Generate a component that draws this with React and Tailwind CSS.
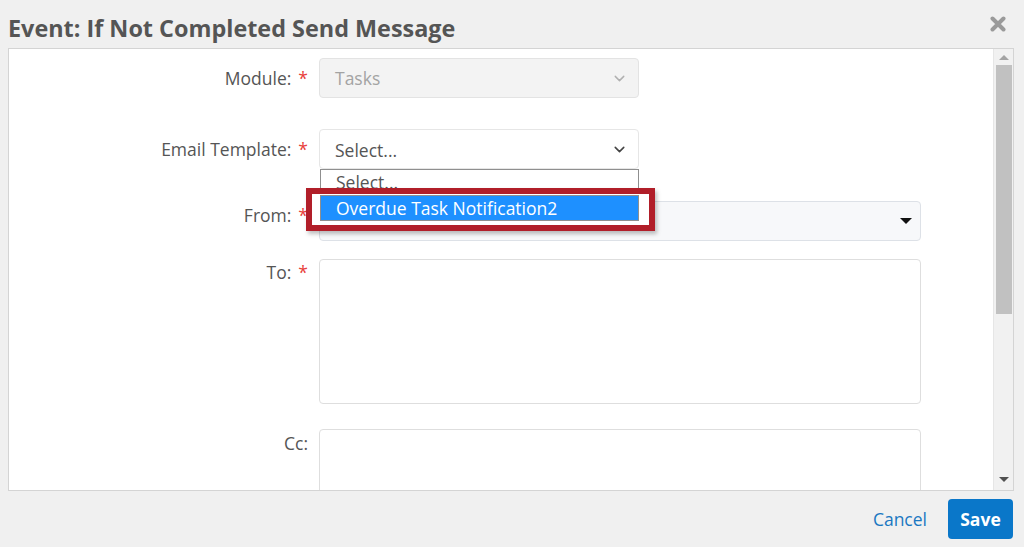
import { ChevronDown } from 'lucide-react';

const font = { fontFamily: '"Open Sans", "Noto Sans", sans-serif' };

function Label({ text, required, className = '' }) {
  return (
    <div className={`w-[310px] shrink-0 pr-[11px] text-right text-[17.5px] leading-6 text-[#555] ${className}`}>
      {text}
      {required ? <span className="ml-[7px] text-[#e8403a]">*</span> : null}
    </div>
  );
}

function CloseIcon() {
  return (
    <svg width="16" height="16" viewBox="0 0 16 16" className="text-[#9a9a9a]">
      <path d="M2.5 2.5 L13.5 13.5 M13.5 2.5 L2.5 13.5" stroke="currentColor" strokeWidth="4" strokeLinecap="round" />
    </svg>
  );
}

function Scrollbar() {
  return (
    <div className="flex w-[20px] shrink-0 flex-col items-center border-l border-[#e6e6e6] bg-[#f1f1f1]">
      <div className="mt-[6px] h-0 w-0 border-x-[5px] border-b-[5px] border-x-transparent border-b-[#a3a3a3]" />
      <div className="mt-[5px] h-[249px] w-[16px] bg-[#c1c1c1]" />
      <div className="flex-1" />
      <div className="mb-[8px] h-0 w-0 border-x-[5px] border-t-[5px] border-x-transparent border-t-[#505050]" />
    </div>
  );
}

export default function App() {
  return (
    <div className="flex h-[547px] w-[1024px] flex-col bg-[#f0f0f0]" style={font}>
      <div className="flex h-[48px] shrink-0 items-center justify-between pl-[8px] pr-[18px]">
        <h1 className="pt-[9px] text-[23.4px] font-bold text-[#555]">Event: If Not Completed Send Message</h1>
        <CloseIcon />
      </div>

      <div className="ml-[8px] mr-[10px] flex h-[443px] shrink-0 border border-[#d4d4d4] bg-white">
        <div className="flex-1 overflow-hidden pt-[9px]">
          <div className="flex items-center">
            <Label text="Module:" required />
            <div className="flex h-[40px] w-[320px] items-center justify-between rounded-[4px] border border-[#e3e3e3] bg-[#f3f3f3] pl-[15px] pr-[10px] text-[17.5px] text-[#a3a3a3]">
              <span>Tasks</span>
              <ChevronDown className="h-[17px] w-[17px] text-[#b0b0b0]" strokeWidth={2} />
            </div>
          </div>

          <div className="mt-[31px] flex items-center">
            <Label text="Email Template:" required />
            <div className="relative w-[320px]">
              <div className="flex h-[40px] items-center justify-between rounded-[4px] border border-[#e6e6e6] bg-white pl-[15px] pr-[10px] text-[17.5px] text-[#555]">
                <span className="pt-[2px]">Select...</span>
                <ChevronDown className="h-[17px] w-[17px] text-[#444]" strokeWidth={2.2} />
              </div>

              {/* open option list */}
              <div className="absolute left-[1px] top-full z-10 w-[319px] text-[17.5px] leading-6">
                <div className="h-[26px] border-x border-t border-[#8f8f8f] bg-white pl-[15px] text-[#555]">Select...</div>
                <div className="relative">
                  <div className="absolute -bottom-[10px] -left-[14px] -right-[16px] -top-[7px] z-10 border-[6px] border-[#b11e29] bg-white shadow-[2px_3px_4px_rgba(0,0,0,0.25)]" />
                  <div className="relative z-20 h-[26px] border border-[#8f8f8f] bg-[#1e90ff] pl-[15px] text-white">
                    Overdue Task Notification2
                  </div>
                </div>
              </div>
            </div>
          </div>

          <div className="mt-[32px] flex items-start">
            <Label text="From:" required className="pt-[2px]" />
            <div className="flex h-[40px] w-[602px] items-center justify-end rounded-[4px] border border-[#dde1e7] bg-[#f7f8fa] pr-[8px]">
              <div className="h-0 w-0 border-x-[6px] border-t-[6px] border-x-transparent border-t-[#111]" />
            </div>
          </div>

          <div className="mt-[18px] flex items-start">
            <Label text="To:" required className="pt-[1px]" />
            <div className="h-[145px] w-[602px] rounded-[4px] border border-[#dedede] bg-white" />
          </div>

          <div className="mt-[25px] flex items-start">
            <Label text="Cc:" className="pt-[2px]" />
            <div className="h-[146px] w-[602px] rounded-[4px] border border-[#dedede] bg-white" />
          </div>
        </div>
        <Scrollbar />
      </div>

      <div className="flex flex-1 items-center justify-end gap-[21px] pr-[11px]">
        <button className="text-[17.5px] text-[#1a78c2]">Cancel</button>
        <button className="h-[40px] w-[65px] rounded-[4px] bg-[#0a77c9] text-[17.5px] font-bold text-white">Save</button>
      </div>
    </div>
  );
}
